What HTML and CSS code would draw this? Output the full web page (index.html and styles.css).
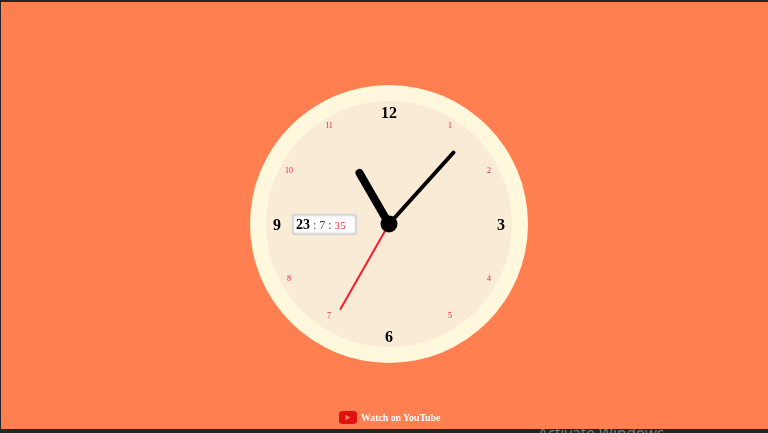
FILE: index.html
```html
<!DOCTYPE html>
<html lang="en">
<head>
<meta charset="utf-8">
<title>Clock</title>
<link rel="stylesheet" href="styles.css">
</head>
<body>
<div class="stage">
  <main class="main">
    <div class="clock">
      <div class="face">
        <span class="num major n12">12</span>
        <span class="num major n3">3</span>
        <span class="num major n6">6</span>
        <span class="num major n9">9</span>
        <span class="num minor n1">1</span>
        <span class="num minor n2">2</span>
        <span class="num minor n4">4</span>
        <span class="num minor n5">5</span>
        <span class="num minor n7">7</span>
        <span class="num minor n8">8</span>
        <span class="num minor n10">10</span>
        <span class="num minor n11">11</span>
        <div class="digital"><b>23</b> : 7 : <span class="secs">35</span></div>
        <svg class="hands" viewBox="0 0 278 278" width="278" height="278" aria-hidden="true">
          <line x1="139" y1="139" x2="90.5" y2="224" stroke="#f81c24" stroke-width="2" stroke-linecap="round"/>
          <line x1="139" y1="139" x2="109.5" y2="88" stroke="#000" stroke-width="8" stroke-linecap="round"/>
          <line x1="139" y1="139" x2="203.5" y2="67.5" stroke="#000" stroke-width="4" stroke-linecap="round"/>
          <circle cx="139" cy="139" r="8.5" fill="#000"/>
        </svg>
      </div>
    </div>
    <footer class="watch">
      <svg class="yt" viewBox="0 0 18 13" width="18" height="13" aria-hidden="true">
        <rect width="18" height="13" rx="3.5" fill="#e01010"/>
        <path d="M6.5 3.8 L11.5 6.5 L6.5 9.2 Z" fill="#f9805c"/>
      </svg>
      <span>Watch on YouTube</span>
    </footer>
  </main>
  <div class="taskbar"><span class="activate">Activate Windows</span></div>
</div>
</body>
</html>
```

FILE: styles.css
```css
* { box-sizing: border-box; }
html, body { margin: 0; height: 100%; }
body {
  background: #20262a;
  font-family: "Liberation Serif", "Times New Roman", serif;
  overflow: hidden;
}
.stage {
  width: 768px;
  height: 433px;
  display: flex;
  flex-direction: column;
  padding-top: 2px;
  padding-left: 1px;
}
.main {
  flex: none;
  height: 427px;
  background: #ff7f50;
  display: flex;
  flex-direction: column;
  align-items: center;
  position: relative;
  filter: blur(0.35px);
}
.clock {
  width: 278px;
  height: 278px;
  margin-top: 83px;
  margin-left: 9px;
  border-radius: 50%;
  background: #fff8dc;
  display: flex;
  align-items: center;
  justify-content: center;
}
.face {
  width: 246px;
  height: 246px;
  border-radius: 50%;
  background: #faebd7;
  position: relative;
}
.hands {
  position: absolute;
  left: -16px;
  top: -16px;
  pointer-events: none;
}
.num {
  position: absolute;
  transform: translate(-50%, -50%);
  line-height: 1;
}
.major { font-size: 16px; font-weight: 700; color: #000; }
.minor { font-size: 8px; color: #f8202a; }
.n12 { left: 123px; top: 12px; }
.n6  { left: 123px; top: 236px; }
.n3  { left: 235px; top: 124px; }
.n9  { left: 11px;  top: 124px; }
.n1  { left: 184px; top: 25px; }
.n2  { left: 223px; top: 70px; }
.n4  { left: 223px; top: 178px; }
.n5  { left: 184px; top: 215px; }
.n7  { left: 63px;  top: 215px; }
.n8  { left: 23px;  top: 178px; }
.n10 { left: 23px;  top: 70px; }
.n11 { left: 63px;  top: 25px; }
.digital {
  position: absolute;
  left: 26px;
  top: 113px;
  width: 65px;
  height: 21px;
  background: #fff;
  border: 1px solid #d3d3d3;
  border-radius: 3px;
  box-shadow: inset 0 0 3px #aaa, 0 0 1px #ccc;
  padding-left: 3px;
  font-size: 12px;
  line-height: 19px;
  color: #444;
  white-space: nowrap;
}
.digital b { font-size: 14px; color: #000; }
.secs { font-size: 10px; color: #f8202a; letter-spacing: 0.8px; }
.watch {
  position: absolute;
  left: 338px;
  top: 409px;
  display: flex;
  align-items: center;
  gap: 4px;
  color: #fff;
  font-size: 9.8px;
  font-weight: 700;
  line-height: 13px;
  white-space: nowrap;
}
.yt { display: block; }
.taskbar {
  flex: 1;
  min-height: 0;
  overflow: hidden;
  position: relative;
  padding-left: 537px;
}
.activate {
  display: block;
  font-family: "Open Sans", sans-serif;
  font-size: 15.4px;
  line-height: 20px;
  color: #7c8184;
  white-space: nowrap;
  margin-top: -5px;
}
```
